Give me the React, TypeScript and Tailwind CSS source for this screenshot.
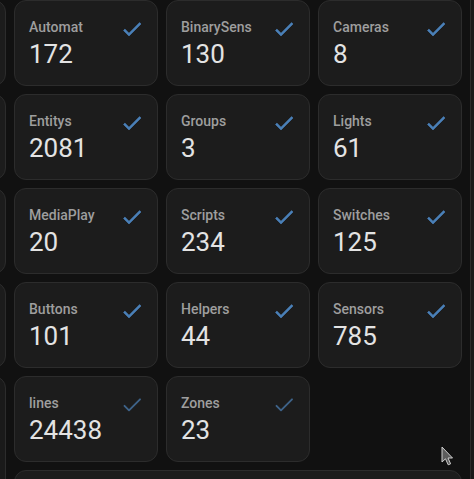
import React from "react";

type Item = { label: string; value: string; dim?: boolean };

const rows: Item[][] = [
  [
    { label: "Automat", value: "172" },
    { label: "BinarySens", value: "130" },
    { label: "Cameras", value: "8" },
  ],
  [
    { label: "Entitys", value: "2081" },
    { label: "Groups", value: "3" },
    { label: "Lights", value: "61" },
  ],
  [
    { label: "MediaPlay", value: "20" },
    { label: "Scripts", value: "234" },
    { label: "Switches", value: "125" },
  ],
  [
    { label: "Buttons", value: "101" },
    { label: "Helpers", value: "44" },
    { label: "Sensors", value: "785" },
  ],
  [
    { label: "lines", value: "24438", dim: true },
    { label: "Zones", value: "23", dim: true },
  ],
];

function Check({ dim }: { dim?: boolean }) {
  if (dim) {
    return (
      <svg width="24" height="24" viewBox="0 0 24 24" className="shrink-0">
        <polyline
          points="4.5,12.8 9,17.3 20,6.3"
          fill="none"
          stroke="#3e6389"
          strokeWidth="1.9"
          strokeLinecap="round"
          strokeLinejoin="round"
        />
      </svg>
    );
  }
  return (
    <svg width="24" height="24" viewBox="0 0 24 24" className="shrink-0">
      <path
        d="M21,7L9,19L3.5,13.5L4.91,12.09L9,16.17L19.59,5.59L21,7Z"
        fill="#4a80b8"
        stroke="#4a80b8"
        strokeWidth="0.6"
        strokeLinejoin="round"
      />
    </svg>
  );
}

function Card({ item }: { item: Item }) {
  return (
    <div className="h-[86px] rounded-xl border border-[#2c2c2c] bg-[#1c1c1c] pt-[16px] pl-[14px] pr-[13px] flex justify-between">
      <div className="flex flex-col">
        <div className="text-[14px] leading-[20px] font-medium text-[#9e9e9e]">
          {item.label}
        </div>
        <div className="mt-[1px] text-[26px] leading-[32px] text-[#e3e3e3]">
          {item.value}
        </div>
      </div>
      <Check dim={item.dim} />
    </div>
  );
}

export default function App() {
  return (
    <div
      className="relative w-[474px] h-[479px] overflow-hidden bg-[#111111]"
      style={{ fontFamily: "Roboto, 'Noto Sans', sans-serif" }}
    >
      <div className="flex items-start gap-2 ml-[-138px]">
        <div className="w-[144px] flex flex-col gap-2 shrink-0">
          <div className="h-[86px] rounded-xl border border-[#2c2c2c] bg-[#1c1c1c]" />
          <div className="h-[86px] rounded-xl border border-[#2c2c2c] bg-[#1c1c1c]" />
          <div className="h-[86px] rounded-xl border border-[#2c2c2c] bg-[#1c1c1c]" />
          <div className="h-[86px] rounded-xl border border-[#2c2c2c] bg-[#1c1c1c]" />
          <div className="h-[200px] rounded-xl border border-[#2c2c2c] bg-[#1a1a1a]" />
        </div>
        <div className="w-[448px] shrink-0 grid grid-cols-[144px_144px_144px] content-start gap-2">
          {rows.flat().map((it) => (
            <Card key={it.label} item={it} />
          ))}
          <div className="h-[86px]" />
          <div className="col-span-3 h-[86px] rounded-xl border border-[#2c2c2c] bg-[#1c1c1c]" />
        </div>
        <div className="w-[144px] h-[560px] shrink-0 mt-[-20px] rounded-xl border border-[#2c2c2c] bg-[#1a1a1a]" />
      </div>
      <svg
        className="absolute left-[441px] top-[446px]"
        width="16"
        height="22"
        viewBox="0 0 16 22"
      >
        <path
          d="M1,1 L1,16 L4.5,12.8 L7.2,18.8 L9.6,17.8 L7,12 L11.5,12 Z"
          fill="#5c5c5c"
          stroke="#cfcfcf"
          strokeWidth="1"
          strokeLinejoin="round"
        />
      </svg>
    </div>
  );
}
